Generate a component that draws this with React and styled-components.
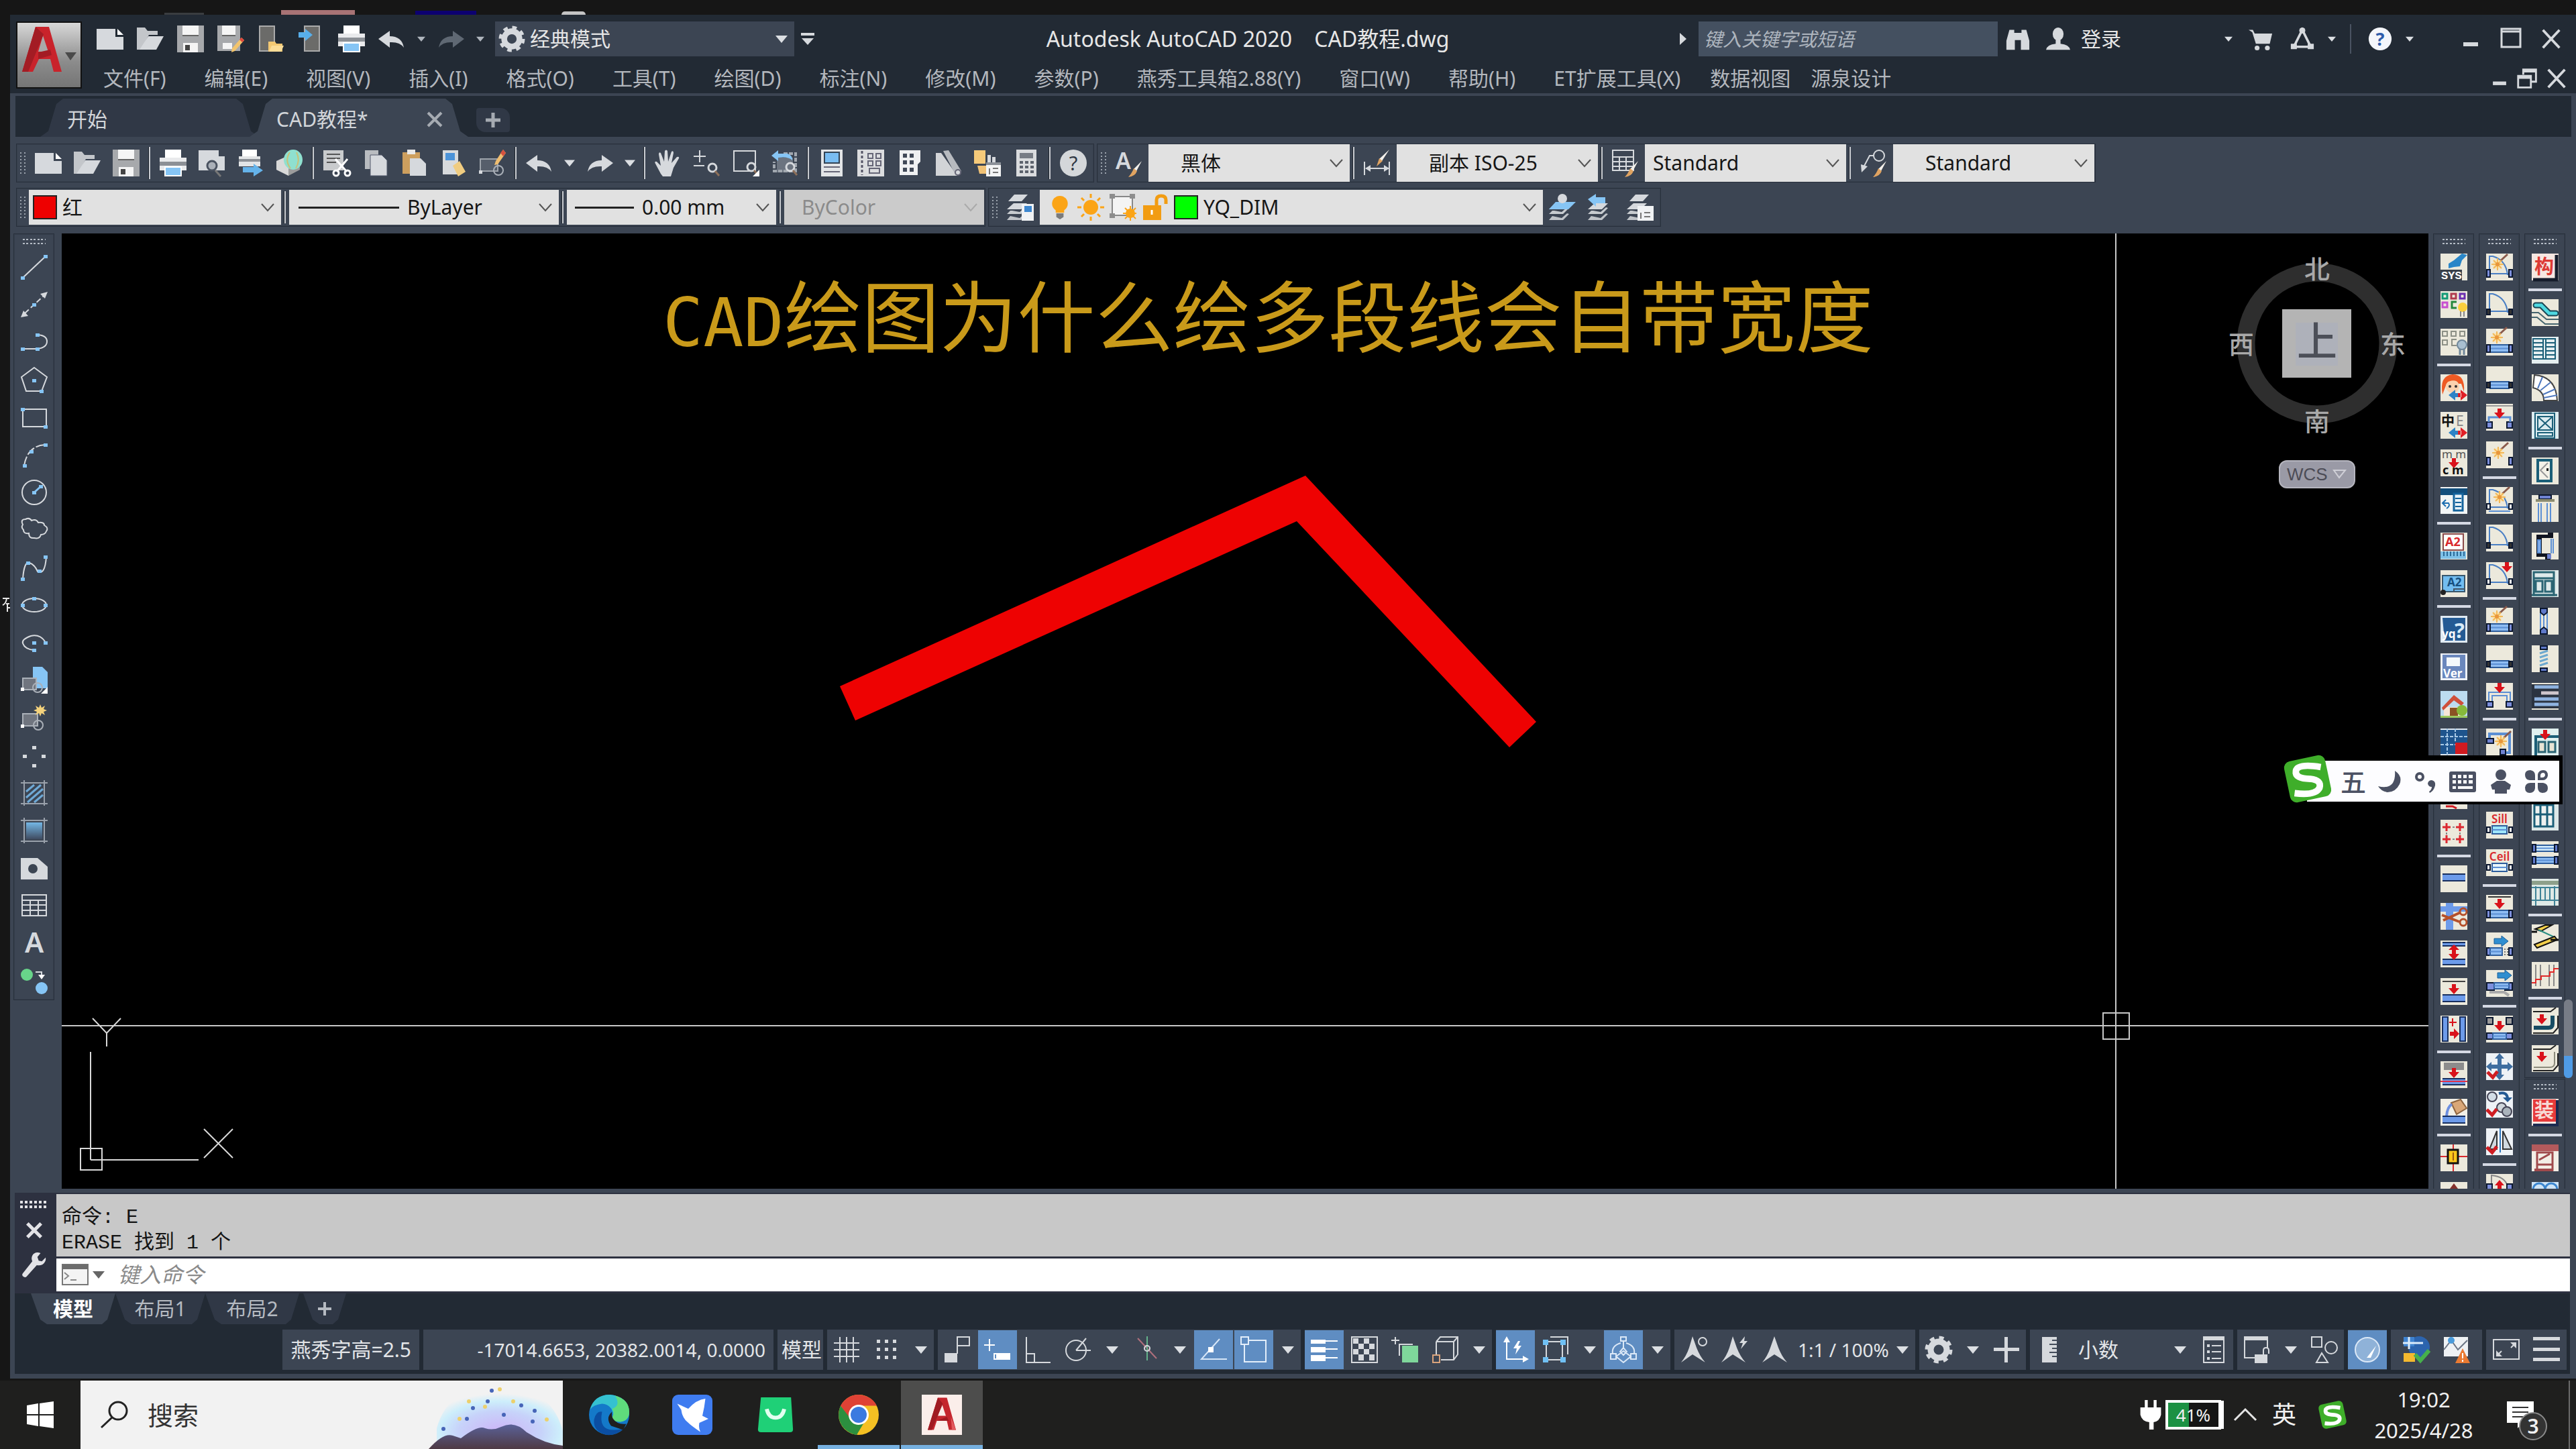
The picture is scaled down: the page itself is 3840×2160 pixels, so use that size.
import { useState } from "react";
import styled, { createGlobalStyle, css } from "styled-components";

const sans = `"Noto Sans", "Noto Sans CJK SC", sans-serif`;
const mono = `"Liberation Mono", "Noto Sans CJK SC", monospace`;
const panel = "#3c4553";
const dark = "#222a34";
const edge = "#28303c";
const light = "#d6d9dd";
const sky = "#86c5f5";
const cream = "#ece9dc";

const GlobalStyle = createGlobalStyle`
  * { box-sizing: border-box; }
  body { margin: 0; background: #161616; font-family: ${sans}; font-size: 30px; line-height: 40px; }
  button, input, select { font: inherit; color: inherit; margin: 0; padding: 0; border: 0; background: none; border-radius: 0; outline: none; }
  a { color: inherit; text-decoration: none; }
  svg { display: block; flex: none; overflow: visible; }
`;

/* ---------- shared pieces of the drawings ---------- */

const Bg = ({ c = cream }) => <rect width="40" height="40" fill={c} />;
const Down = ({ x = 20, y = 2 }) => (
  <path transform={`translate(${x} ${y})`} d="M-3 0h6v6h5l-8 9-8-9h5z" fill="#d9121b" />
);
const Wand = ({ x = 17, y = 15 }) => (
  <g transform={`translate(${x} ${y})`}>
    <path d="M3-4L15-15" stroke="#8a5a4c" strokeWidth="3" />
    <circle r="7" fill="#fbe3b0" />
    <path d="M0-9V9M-9 0H9M-6-6L6 6M-6 6L6-6" stroke="#f2b95a" strokeWidth="2" />
    <circle r="3" fill="#e8963c" />
  </g>
);
const Stubs = ({ y = 24, h = 11, w = 6, fill = "#7d8fdc" }) => (
  <g fill={fill} stroke="#0c1830" strokeWidth="2">
    <rect x="1" y={y} width={w - 1} height={h} />
    <rect x={40 - w} y={y} width={w - 1} height={h} />
  </g>
);
const Band = ({ x = 6, y = 24, w = 28, h = 11, fill = "#8fbdf2" }) => (
  <g>
    <rect x={x} y={y} width={w} height={h} fill={fill} stroke="#2d5d9c" strokeWidth="2" />
    <path d={`M${x} ${y + h / 2}h${w}`} stroke="#5b8fd4" strokeWidth="2" />
  </g>
);
const Slab = ({ y, h = 9 }) => (
  <g>
    <rect x="3" y={y} width="34" height={h} fill="#6d9bea" />
    <path d={`M3 ${y}h34M3 ${y + h}h34`} stroke="#182f5e" strokeWidth="2" />
  </g>
);
const Leaf = () => (
  <path d="M5 32V4h5q20 6 22 28M5 30h28" fill="none" stroke="#4a7fc4" strokeWidth="2" />
);
const Right = ({ x = 12, y = 6 }) => (
  <path transform={`translate(${x} ${y})`} d="M0 3h11v-4l10 8-10 8v-4H0z" fill="#2f8ed0" stroke="#1c5f96" />
);
const Dot = ({ x, y }) => <rect x={x - 3} y={y - 2} width="6" height="5" fill={sky} />;
const Star = ({ x, y }) => (
  <path transform={`translate(${x} ${y})`} d="M0-9l2 5 5-3-2 5 5 2-5 2 2 5-5-3-2 5-2-5-5 3 2-5-5-2 5-2-2-5 5 3z" fill="#f4d27c" />
);
const Pencil = () => (
  <g>
    <path d="M36 18l4 4-14 16-5 2 1-6z" fill="#f2c46c" />
    <path d="M36 18l4 4-3 3-4-4z" fill="#e0473c" />
  </g>
);
const Brush = () => (
  <g>
    <path d="M39 17l-8 15-4-3z" fill="#f4f1ec" />
    <path d="M27 28l5 4q-3 8-13 9 5-5 8-13z" fill="#e0a361" />
  </g>
);
const Lens = ({ x = 28, y = 28 }) => (
  <g transform={`translate(${x} ${y})`} fill="none">
    <circle r="6" stroke={light} strokeWidth="3" />
    <path d="M4 5l6 7" stroke="#8d6f59" strokeWidth="3" />
  </g>
);
const Layers = () => (
  <g fill={light}>
    <path d="M10 14h20l-9 9H0z" />
    <path d="M8 25h-3l-5 5h21l9-9-3-1-8 7z" opacity=".9" />
    <path d="M5 33l-5 6h21l9-9-3-1-8 7z" opacity=".85" />
  </g>
);
const LogoA = ({ bg }) => (
  <g>
    {bg && <rect width="40" height="40" fill="#fbeeea" />}
    <path d="M16 3h9l9 32h-7l-2-9H15l-3 9H6z" fill="#c4262e" />
    <path d="M20 9l4 12h-8z" fill={bg ? "#fbeeea" : "#aaa"} />
    <path d="M16 3L6 35h4L21 9zM15 26l10-4 2 4z" fill="#a01b22" />
    <path d="M29 22l5 13h-4z" fill="#e35a5e" />
  </g>
);
const SogouS = () => (
  <g>
    <rect x="4" y="4" width="32" height="32" rx="5" transform="rotate(-12 20 20)" fill="#3fae2a" />
    <path d="M30 11Q12 8 11 14t11 6q9 1 7 7-3 6-19 4" fill="none" stroke="#fff" strokeWidth="5" />
  </g>
);

const line = { fill: "none", stroke: light, strokeWidth: 2 };

/* every icon is drawn on a 40 x 40 grid */
const icons = {
  new: <><path d="M0 5h28v12h12v19H0z" fill={light} /><path d="M31 5l9 9h-9z" fill="#fff" /></>,
  open: <><path d="M0 36V3h12l4 5h15v6H18L6 36z" fill="#c3c6ca" /><path d="M17 16h23L29 36H4z" fill={light} /></>,
  save: <><path d="M0 0h40v40H0z" fill="#a7a9ac" /><path d="M8 0h24v14H8zM9 26h22v14H9z" fill="#f5f5f5" /><path d="M8 15h24" stroke="#666" strokeWidth="2" /><path d="M12 29h7v8h-7z" fill="#444" /></>,
  saveAs: <><path d="M0 0h34v38H0z" fill="#a7a9ac" /><path d="M7 0h20v14H7zM8 26h14v9H8z" fill="#f5f5f5" /><path d="M7 15h20" stroke="#666" strokeWidth="2" /><Pencil /></>,
  mobileOpen: <><path d="M3 1h22v37H3z" fill="#6b6b69" stroke="#aaa" strokeWidth="2" /><path d="M16 24h10l2 3h9v12H16z" fill="#f3c873" /><path d="M21 30h18l-4 9H17z" fill="#fbdc97" /></>,
  mobileSave: <><path d="M10 1h22v37H10z" fill="#6b6b69" stroke="#aaa" strokeWidth="2" /><path d="M1 10h10V5l11 9-11 9v-5H1z" fill="#57aeea" /></>,
  print: <><path d="M8 0h24v12H8z" fill="#fff" /><path d="M0 12h40v19H0z" fill="#e9eaec" /><path d="M0 18h40v6H0z" fill="#8c9096" /><path d="M8 26h24v13H8z" fill={sky} stroke="#fff" strokeWidth="2" /></>,
  undo: <path d="M0 20L17 8v8q18 0 21 17-6-9-21-8v8z" fill={light} />,
  redo: <path d="M40 20L23 8v8Q5 16 2 33q6-9 21-8v8z" fill={light} />,
  redoDim: <path d="M40 20L23 8v8Q5 16 2 33q6-9 21-8v8z" fill="#5f6873" />,
  gear: <><circle cx="20" cy="20" r="12" fill="none" stroke={light} strokeWidth="9" /><circle cx="20" cy="20" r="18" fill="none" stroke={light} strokeWidth="5" strokeDasharray="7 7.14" /></>,
  customize: <><path d="M10 11h20v4H10z" fill={light} /><path d="M11 19h18l-9 10z" fill={light} /></>,
  binoculars: <path d="M6 5h8v5h12V5h8l5 18v15H25V22h-10v16H1V23z" fill={light} />,
  user: <><ellipse cx="20" cy="12" rx="9" ry="11" fill={light} /><path d="M16 22h8v6q14 1 16 10H0q2-9 16-10z" fill={light} /></>,
  cart: <><path d="M0 5h7l3 6h29l-4 17H12L6 9" fill={light} /><circle cx="14" cy="35" r="4" fill={light} /><circle cx="31" cy="35" r="4" fill={light} /></>,
  appStore: <><path d="M20 5L6 33h28z" fill="none" stroke={light} strokeWidth="4" /><circle cx="20" cy="6" r="5" fill={light} /><path d="M1 28h10v9H1zM29 28h10v9H29z" fill={light} /></>,
  helpWhite: <><circle cx="20" cy="20" r="19" fill="#f4f6fb" /><text x="20" y="31" textAnchor="middle" fontSize="30" fontWeight="700" fill="#2e5cab">?</text></>,
  min: <path d="M9 25h22v6H9z" fill={light} />,
  max: <path d="M6 5h28v27H6zM6 9h28" fill="none" stroke={light} strokeWidth="3" />,
  restore: <path d="M13 14V6h20v19h-8M5 16h20v18H5zM5 19h20M13 9h20" fill="none" stroke={light} strokeWidth="3" />,
  close: <path d="M7 6l26 28M33 6L7 34" fill="none" stroke={light} strokeWidth="4" />,
  preview: <><path d="M0 1h30v9h9v21H0z" fill={light} /><circle cx="20" cy="24" r="7" fill="#aab0b8" stroke="#4a5260" strokeWidth="3" /><path d="M25 31l8 9" stroke="#777" strokeWidth="3" /></>,
  publish: <><path d="M7 0h22v10H7z" fill="#fff" /><path d="M2 10h32v15H2z" fill="#e2e4e6" /><path d="M2 14h32v4H2z" fill="#8c9096" /><path d="M8 26h16v-5l14 10-14 9v-6H8z" fill="#65b3ea" /></>,
  globe: <><path d="M0 17l18-8v30L0 30z" fill="#d9d9d9" /><path d="M18 39l17-9V14H18z" fill="#9c9c9c" /><ellipse cx="25" cy="15" rx="14" ry="15" fill="#8fe0cf" /><path d="M20 4q-8 12 1 24M30 4q6 12-1 24" stroke="#c9c178" strokeWidth="2" fill="none" /></>,
  cut: <><path d="M0 1h30v30H0z" fill="#c9cbcd" /><path d="M5 7h20M5 13h20M5 19h14" stroke="#555" strokeWidth="2" /><path d="M18 14l17 19M36 14L20 33" stroke="#fff" strokeWidth="3" /><circle cx="19" cy="35" r="4" fill="none" stroke="#fff" strokeWidth="3" /><circle cx="36" cy="35" r="4" fill="none" stroke="#fff" strokeWidth="3" /></>,
  copy: <><path d="M4 1h20v28H4z" fill="#b9bcc0" /><path d="M12 8h17l8 8v23H12z" fill={light} stroke="#50586a" /></>,
  paste: <><path d="M2 4h26v32H2z" fill="#cd9f5e" /><path d="M9 0h12v7H9z" fill="#e8e8e8" /><path d="M13 13h16l8 8v18H13z" fill={light} /></>,
  match: <><path d="M4 1h23v36H4z" fill="#d8dadc" /><path d="M8 5h14v11H8z" fill="#4c93d8" /><path d="M19 24l10-7 9 16-11 7z" fill="#f0cc80" /></>,
  blockEdit: <><path d="M2 14h26v18H2z" fill="#565e6b" stroke="#9da3ab" strokeWidth="2" /><path d="M0 31h5v5H0z" fill={light} /><circle cx="29" cy="31" r="7" fill="none" stroke="#aab0b8" strokeWidth="2" /><path d="M36 0l4 5-12 17-5 1 2-6z" fill="#efbd70" /><path d="M36 0l4 5-4 5-4-5z" fill="#d5523f" /></>,
  hand: <path d="M9 36L1 21q-2-4 2-3l6 6L6 7q0-4 3-2l5 13L15 2q2-3 4 0l1 16 5-15q3-2 3 2l-3 15 8-9q4-1 3 2L28 27l-4 13H12z" fill={light} />,
  zoomRt: <><path d="M0 10h18M9 1v18M0 24h16" {...line} /><Lens x={28} y={27} /></>,
  zoomWin: <><path d="M2 2h32v30H2z" {...line} /><Lens x={28} y={26} /><path d="M40 30v10H30z" fill="#fff" /></>,
  zoomPrev: <><path d="M8 12h24v22H8z" fill="#6c7480" /><path d="M18 6h18v26H4V18" fill="none" stroke="#a1a7af" strokeWidth="4" strokeDasharray="6 2" /><path d="M0 9l10-8v5h14q8 3 7 10-5-6-21-4v5z" fill={sky} /><Lens x={28} y={26} /></>,
  props: <><path d="M4 0h32v40H4z" fill="#e3e5e7" /><path d="M9 4h22v16H9z" fill="#79bdf2" stroke="#345" strokeWidth="2" /><path d="M8 26h24M8 33h24" stroke="#667" strokeWidth="2" /></>,
  design: <><path d="M0 0h40v40H0z" fill="#dcdddf" /><path d="M7 2v36" stroke="#556" strokeWidth="3" strokeDasharray="4 3" /><path d="M16 6h7v7h-7zM28 6h7v7h-7zM16 17h7v7h-7zM28 17h7v7h-7zM18 28h15v7H18z" fill="none" stroke="#667" strokeWidth="2" /></>,
  palettes: <><path d="M5 1h31v17l-4 4v16H5z" fill="#f0f1f2" /><path d="M10 6h6v6h-6zM20 6h6v6h-6zM10 16h6v6h-6zM20 16h6v6h-6zM10 27h6v6h-6zM20 27h6v6h-6z" fill="#424a58" /></>,
  sheetSet: <><path d="M1 5h8l24 34H1z" fill="#d2d4d7" /><path d="M12 2l8-1 19 31-8 7z" fill="#b7babf" /><circle cx="34" cy="34" r="4" fill={light} stroke="#667" strokeWidth="2" /></>,
  markup: <><path d="M0 1h17v20H0z" fill="#f6ca7a" /><path d="M20 8h5v13h-5zM27 11h5v10h-5z" fill={light} /><path d="M5 24h14v12H8z" fill="#f0c175" /><path d="M18 20h22v20H18z" fill="#f3f4f5" /><path d="M18 21h22" stroke="#8b9098" strokeWidth="4" /><path d="M23 28v9M28 28h8M28 34h8" stroke="#777" strokeWidth="2" /></>,
  calc: <><path d="M5 0h30v40H5z" fill="#dadcde" /><path d="M10 5h20v8H10z" fill="#777c84" /><path d="M10 17h5v4h-5zM18 17h5v4h-5zM26 17h5v4h-5zM10 24h5v4h-5zM18 24h5v4h-5zM26 24h5v4h-5zM10 31h5v4h-5zM18 31h5v4h-5zM26 31h5v4h-5z" fill="#5c626c" /></>,
  help: <><circle cx="20" cy="20" r="20" fill="#d4d7da" /><text x="20" y="31" textAnchor="middle" fontSize="29" fill="#2f3744">?</text></>,
  textStyle: <><text x="0" y="29" fontSize="34" fontWeight="600" fill={light}>A</text><Brush /></>,
  dimStyle: <><path d="M1 18v20M38 18v20M3 28h34" {...line} /><path d="M2 28l8-5v10zM38 28l-8-5v10z" fill={light} /><path d="M38 0L27 17l-4-3z" fill="#f4f1ec" /><path d="M23 13l5 4-9 8z" fill="#e0a361" /></>,
  tableStyle: <><path d="M1 1h31v30H1zM1 11h31M1 18h31M1 25h31M11 11v20M21 11v20" {...line} /><Brush /></>,
  leaderStyle: <><circle cx="28" cy="9" r="8" {...line} /><path d="M20 9h-6L4 28" {...line} /><path d="M1 22l10 3-9 9z" fill={light} /><Brush /></>,
  layerProps: <><Layers /><path d="M11 1h20l-9 10H2z" fill={light} /><path d="M22 15h18v25H22z" fill="#f0f2f4" /><path d="M26 18h11v9H26z" fill="#3d87cf" /></>,
  layerCurrent: <><Layers /><path d="M10 12h30L29 23H0z" fill={sky} /><circle cx="20" cy="7" r="7" fill={light} /></>,
  layerPrev: <><Layers /><path d="M0 8l12-8v5h14v9H12v5z" fill={sky} /></>,
  layerStates: <><Layers /><path d="M13 1h20l-9 10H4z" fill={light} /><path d="M16 18h24v22H16z" fill="#f0f2f4" /><path d="M21 28v9M26 28h9M26 34h9" stroke="#777" strokeWidth="2" /></>,
  bulb: <><circle cx="20" cy="14" r="13" fill="#fba416" /><path d="M13 22h14v7H13z" fill="#fba416" /><path d="M14 30h12v6l-6 4-6-4z" fill="#7b7b7b" /></>,
  sun: <><circle cx="20" cy="20" r="11" fill="#fba416" /><path d="M20 0v6M20 34v6M0 20h6M34 20h6M6 6l4 4M30 30l4 4M34 6l-4 4M6 34l4-4" stroke="#fba416" strokeWidth="3" /></>,
  vpFreeze: <><path d="M4 4h30v28H4z" fill="#f4f4f4" stroke="#888" strokeWidth="2" /><path d="M0 0h8v7H0zM30 0h8v7h-8zM0 29h8v7H0z" fill="#8d8d8d" /><circle cx="31" cy="29" r="7" fill="#fba416" /><path d="M31 18v22M20 29h20M23 21l16 16M39 21L23 37" stroke="#fba416" strokeWidth="2" /></>,
  lock: <><path d="M2 17h27v22H2z" fill="#f29c12" /><path d="M22 17V9q0-6 7-6t7 6v6" fill="none" stroke="#f29c12" strokeWidth="5" /><path d="M15 24v7" stroke="#fff" strokeWidth="3" /></>,

  line: <><path d="M3 36L37 4" {...line} /><Dot x={3} y={36} /><Dot x={37} y={4} /></>,
  xline: <><path d="M6 33L34 7" {...line} strokeDasharray="8 4" /><path d="M0 39l4-10 7 8zM40 1L29 4l7 7z" fill={light} /><Dot x={20} y={20} /></>,
  pline: <><path d="M3 30h22q14-2 14-11T25 9" {...line} /><Dot x={3} y={30} /><Dot x={25} y={30} /><Dot x={25} y={9} /></>,
  polygon: <><path d="M20 2l19 14-8 21H8L1 16z" {...line} /><Dot x={20} y={21} /><Dot x={31} y={37} /></>,
  rect: <><path d="M3 8h35v26H3z" {...line} /><Dot x={3} y={8} /><Dot x={37} y={34} /></>,
  arc: <><path d="M5 36Q10 6 37 5" {...line} strokeDasharray="14 3" /><Dot x={6} y={36} /><Dot x={16} y={15} /><Dot x={37} y={5} /></>,
  circle: <><circle cx="20" cy="20" r="18" {...line} /><path d="M20 20l10-9" stroke={sky} strokeWidth="3" /><Dot x={20} y={20} /><Dot x={30} y={11} /></>,
  revcloud: <path d="M3 12q-4-8 4-8 6-3 9 2 7-3 10 3 9-1 9 4 7 4 3 9-2 5-8 5-2 7-10 5-8 1-8-7-8 1-8-5-4-4-1-8z" {...line} />,
  spline: <><path d="M3 37Q5 10 13 13t12 13q11 6 13-22" {...line} /><Dot x={3} y={37} /><Dot x={11} y={13} /><Dot x={28} y={25} /><Dot x={37} y={4} /></>,
  ellipse: <><ellipse cx="20" cy="20" rx="18" ry="10" {...line} /><Dot x={3} y={20} /><Dot x={20} y={10} /><Dot x={37} y={20} /></>,
  ellipseArc: <><path d="M36 18Q28 7 15 10 1 15 3 21q3 9 17 10" {...line} /><Dot x={20} y={20} /><Dot x={20} y={31} /><Dot x={37} y={20} /></>,
  insert: <><path d="M18 0h14l8 8v24H18z" fill={sky} /><path d="M3 17h20v17H3z" fill="#70757f" stroke="#aab0b8" strokeWidth="2" /><circle cx="25" cy="31" r="7" fill="none" stroke="#aab0b8" strokeWidth="2" /><path d="M40 30v10H30zM0 31h5v5H0z" fill="#fff" /></>,
  block: <><path d="M3 14h22v18H3z" fill="#70757f" stroke="#aab0b8" strokeWidth="2" /><circle cx="26" cy="31" r="7" fill="none" stroke="#aab0b8" strokeWidth="2" /><Star x={29} y={9} /><path d="M0 30h5v5H0z" fill="#fff" /></>,
  point: <path d="M17 6h6v5h-6zM3 19h6v5H3zM31 19h6v5h-6zM17 33h6v5h-6z" fill={light} />,
  hatch: <><path d="M5 1v38M35 1v38M0 5h40M0 36h40" stroke="#9aa1ab" strokeWidth="2" /><path d="M8 18l12-10M8 27L30 8M10 34L33 14M20 34l13-11" stroke="#6fa9d6" strokeWidth="3" /></>,
  gradient: <><defs><linearGradient id="fade" x2="0" y2="1"><stop stopColor="#74b7e6" /><stop offset="1" stopColor="#3f4b60" /></linearGradient></defs><path d="M5 1v38M35 1v38M0 5h40M0 36h40" stroke="#9aa1ab" strokeWidth="2" /><path d="M8 8h24v25H8z" fill="url(#fade)" /></>,
  region: <><path d="M0 5h25l15 13v19H0z" fill={light} /><ellipse cx="18" cy="21" rx="7" ry="7" fill={panel} /></>,
  table: <path d="M2 4h36v31H2zM2 12h36M2 19h36M2 27h36M14 12v23M26 12v23" {...line} />,
  mtext: <text x="20" y="34" textAnchor="middle" fontSize="42" fontWeight="600" fill={light}>A</text>,
  addSel: <><circle cx="9" cy="11" r="9" fill="#68d58a" /><circle cx="31" cy="31" r="9" fill={sky} /><path d="M22 7h9v6" {...line} /><path d="M26 11h10l-5 7z" fill="#fff" /></>,

  sys: <><Bg /><path d="M0 24h32v16H0z" fill="#39404a" /><path d="M12 15l8-5 12-10 8 2-8 8-3 9-9 1-8 2z" fill="#2a86c8" /><text x="1" y="38" fontSize="17" fontWeight="700" fill="#fff" fontFamily="Liberation Mono">SYS</text></>,
  blocks: <><Bg /><g fill="none" strokeWidth="3"><path d="M3 4h7v7H3z" stroke="#139a77" /><path d="M16 4h7v7h-7z" stroke="#b03a4f" /><path d="M29 4h7v7h-7z" stroke="#6b2fb0" /><path d="M3 17h7v7H3z" stroke="#c84fd0" /><path d="M24 16h-7v9h7" stroke="#25883d" /></g><circle cx="33" cy="24" r="7" fill="#fbcf3d" /><path d="M30 30v8M35 30v8" stroke="#888" strokeWidth="2" /></>,
  keys: <><Bg /><path d="M3 4h7v7H3zM16 4h7v7h-7zM29 4h7v7h-7zM3 17h7v7H3zM24 16h-7v9h7" fill="none" stroke="#8d9086" strokeWidth="2" /><circle cx="32" cy="24" r="7" fill="#a9bfd0" stroke="#70879a" strokeWidth="2" /><path d="M29 30v9M35 30v9" stroke="#70879a" strokeWidth="3" /></>,
  girl: <><Bg /><path d="M3 30Q-2 2 18 0q19 0 17 26l-4-12H9z" fill="#ee5a24" /><circle cx="18" cy="18" r="10" fill="#fbd2ae" /><path d="M8 13Q20 5 30 14L28 6H10z" fill="#ee5a24" /><circle cx="14" cy="18" r="2" fill="#333" /><circle cx="23" cy="18" r="2" fill="#333" /><path d="M12 31l10-8v16zM22 28v6h4v-6z" fill="#2d83c6" /><path d="M40 31l-10-8v16zM26 28h5v6h-5z" fill="#e01f26" /></>,
  zhEn: <><Bg /><text x="1" y="21" fontSize="20" fontWeight="700" fill="#111">中</text><text x="23" y="21" fontSize="21" fill="#888">E</text><path d="M12 31l10-8v16zM22 28v6h4v-6z" fill="#2d83c6" /><path d="M40 31l-10-8v16zM26 28h5v6h-5z" fill="#e01f26" /></>,
  mmCm: <><Bg /><text x="2" y="13" fontSize="17" fill="#555">m m</text><Down x={20} y={13} /><text x="3" y="37" fontSize="18" fontWeight="700" fill="#111">c m</text></>,
  exitDoc: <><Bg c="#f2f5f5" /><path d="M0 2h40v10H0z" fill="#124e7c" /><path d="M20 10h13v25H20z" fill="#e8f2f8" stroke="#14639c" strokeWidth="3" /><path d="M22 17h9M22 23h9M22 29h9" stroke="#14639c" strokeWidth="2" /><path d="M4 24h8q3 4-3 8M8 19l-5 5 5 5" stroke="#1b6db0" strokeWidth="2" fill="none" /></>,
  a2red: <><Bg /><path d="M4 2h30v24H4z" fill="#fff" stroke="#8b4a4a" strokeWidth="2" /><text x="7" y="20" fontSize="18" fontWeight="700" fill="#d9292d">A2</text><path d="M0 28h38v11H0z" fill="#7fc1e8" /><path d="M5 28v7M10 28v7M15 28v7M20 28v7M25 28v7M30 28v7M35 28v7" stroke="#2d6c99" strokeWidth="2" /></>,
  a2blue: <><Bg /><path d="M3 8h33v24H3z" fill="#72bdf0" stroke="#38586e" strokeWidth="2" /><text x="10" y="24" fontSize="17" fontWeight="700" fill="#17507f">A2</text><circle cx="4" cy="33" r="4" fill="#222" /><path d="M20 33v-5h16" stroke="#456" strokeWidth="2" fill="none" /></>,
  yq: <><Bg c="#dfe9f2" /><path d="M3 3h34v34H6z" fill="#245a94" /><text x="2" y="33" fontSize="17" fontWeight="700" fill="#fff">yq</text><text x="21" y="33" fontSize="31" fontWeight="700" fill="#d8ebf8">?</text></>,
  ver: <><Bg c="#eef1f7" /><path d="M3 2h34v35H3z" fill="#6a87bd" /><path d="M9 6h20v13H9z" fill="#f4f8fb" /><text x="4" y="36" fontSize="17" fontWeight="700" fill="#fff">Ver</text></>,
  house: <><Bg c="#bcdcf0" /><path d="M5 24h26v15H5z" fill="#f6e6d8" /><path d="M2 25L20 6l15 12-4 4-11-8L4 29z" fill="#cf4f3a" /><path d="M14 25h12v14H14z" fill="#8a5324" /><circle cx="32" cy="29" r="8" fill="#86b93a" /><path d="M0 37h40v3H0z" fill="#9ccb5f" /></>,
  axisNet: <><Bg c="#dfe8f0" /><path d="M0 2h40v36H0z" fill="#1e548d" /><path d="M0 12h40M0 24h22M10 0v40M22 0v20" stroke="#a8c9e6" strokeWidth="2" strokeDasharray="5 2" /><path d="M22 21h18v17H22z" fill="#d01a20" /></>,
  axisRed: <><Bg /><path d="M8 36h10l6 3" stroke="#d01a20" strokeWidth="3" fill="none" /></>,
  plus4: <><Bg /><path d="M3 11h12M9 5v12M23 11h12M29 5v12M3 29h12M9 23v12M23 29h12M29 23v12" stroke="#dc2830" strokeWidth="3" /><path d="M9 19v3M29 19v3M18 11h3M18 29h3" stroke="#888" strokeWidth="2" /></>,
  wall: <><Bg /><Slab y={13} h={10} /></>,
  scissors: <><Bg /><path d="M0 5h40v8H0zM8 0h11v40H8z" fill="#6d9bea" /><path d="M2 18l26 10M4 26l26-12" stroke="#b5502a" strokeWidth="4" /><circle cx="34" cy="13" r="5" fill="none" stroke="#b5502a" strokeWidth="3" /><circle cx="34" cy="29" r="5" fill="none" stroke="#b5502a" strokeWidth="3" /></>,
  wallMove: <><Bg /><Slab y={3} h={5} /><Slab y={28} h={8} /><path d="M20 6l8 8h-5v6h5l-8 9-8-9h5v-6h-5z" fill="#d9121b" /></>,
  wallFrom: <><Bg /><path d="M3 5h34" stroke="#444" strokeWidth="2" /><Down x={20} y={9} /><Slab y={25} h={10} /></>,
  wallPair: <><Bg /><path d="M3 2h8v36H3zM29 2h8v36h-8z" fill="#6d9bea" stroke="#182f5e" strokeWidth="2" /><path d="M13 10h11M18 4v12" stroke="#d9121b" strokeWidth="2" /><path d="M14 24h6v-5l8 8-8 8v-5h-6z" fill="#d9121b" /></>,
  wallAlign: <><Bg /><path d="M5 2h30v11H5z" fill="#8c8c8c" /><Down x={20} y={10} /><Slab y={26} h={9} /><path d="M0 30h40" stroke="#e03048" strokeWidth="2" /></>,
  bucket: <><Bg c="#f2efe6" /><path d="M16 6L30 1l9 13-15 9z" fill="#d9a778" stroke="#8e6540" strokeWidth="2" /><path d="M17 8q-7 4-8 18" stroke="#6d8fe0" strokeWidth="4" fill="none" /><Slab y={26} h={10} /></>,
  column: <><Bg /><path d="M0 18h40M19 0v40" stroke="#d9292d" strokeWidth="2" /><path d="M11 8h15v20H11z" fill="#fbc71c" stroke="#111" strokeWidth="3" /><path d="M19 12v12" stroke="#a05a10" strokeWidth="2" /></>,
  columnCut: <><Bg /><path d="M14 10l6-8 6 8z" fill="#84302c" /></>,

  doorWand: <><Bg /><Leaf /><Stubs /><Wand x={17} y={16} /></>,
  door: <><Bg /><Leaf /><Stubs y={27} h={8} fill="#333" /></>,
  winWand: <><Bg /><Band /><Stubs /><Wand x={16} y={13} /></>,
  win: <><Bg /><Band y={23} h={10} /><Stubs y={24} h={8} fill="#333" /></>,
  bay: <><Bg /><Stubs y={27} h={9} w={9} /><path d="M4 27v-7h32v7" fill="none" stroke="#5b8fd4" strokeWidth="3" /><path d="M0 3h40" stroke="#999" strokeWidth="2" /><Down x={20} y={7} /></>,
  openWand: <><Bg /><Stubs /><Wand x={18} y={17} /></>,
  doorWall: <><Bg /><Leaf /><Stubs y={25} h={8} fill="#f4f4f4" /><path d="M4 36h32" stroke="#5b8fd4" strokeWidth="2" /><Wand x={20} y={15} /></>,
  doorDown: <><Bg /><Leaf /><Stubs y={25} h={8} fill="#f4f4f4" /><Down x={31} y={0} /></>,
  bay2: <><Bg /><Stubs y={28} h={8} w={10} /><path d="M4 27V14h32v13M9 27v-8h22v8" fill="none" stroke="#5b8fd4" strokeWidth="2" /><Down x={20} y={0} /></>,
  corner: <><Bg /><path d="M5 15V8h30v28h-8" fill="none" stroke="#5b8fd4" strokeWidth="4" /><path d="M1 15h10v7H1zM21 31h8v8h-8z" fill="#6f83d2" stroke="#0c1830" strokeWidth="2" /><Wand x={22} y={19} /></>,
  sill: <><Bg /><text x="20" y="17" textAnchor="middle" fontSize="17" fontWeight="600" fill="#d9292d">Sill</text><Stubs y={23} h={8} fill="#f4f4f4" /><Band x={9} w={22} y={21} h={12} fill="#9fe6fa" /></>,
  ceil: <><Bg /><text x="20" y="17" textAnchor="middle" fontSize="17" fontWeight="600" fill="#d9292d">Ceil</text><Stubs y={23} h={8} fill="#f4f4f4" /><Band x={9} w={22} y={21} h={12} fill="#e8f6fa" /></>,
  winDown: <><Bg /><path d="M3 3h34" stroke="#333" strokeWidth="2" /><Down x={20} y={6} /><Band y={23} /><Stubs y={23} /></>,
  winRight: <><Bg /><Right /><Stubs y={23} /><Band w={18} y={23} /><path d="M28 24v10M32 24v10" stroke="#777" strokeDasharray="2 2" strokeWidth="2" /></>,
  winRight2: <><Bg /><Right x={17} y={1} /><Stubs y={19} w={12} /><Band x={12} w={22} y={19} h={9} /><path d="M5 33h22l7 5" stroke="#aaa" strokeWidth="4" fill="none" /></>,
  swapWin: <><Bg /><Stubs y={3} h={10} w={10} fill="#999" /><Stubs y={26} h={9} w={10} /><Band x={10} w={20} y={26} h={9} /><Down x={20} y={8} /></>,
  move: <><Bg c="#eef2f6" /><path d="M20 0l7 8h-4v9h9v-4l8 7-8 7v-4h-9v9h4l-7 8-7-8h4v-9H8v4l-8-7 8-7v4h9V8h-4z" fill="#3f6ea0" /><path d="M2 28l8 8 7-9" stroke="#cf1d22" strokeWidth="5" fill="none" /></>,
  copyObj: <><Bg c="#eef2f6" /><circle cx="9" cy="9" r="7" fill="#d3dde6" stroke="#445" strokeWidth="2" /><path d="M19 4q12-3 13 7" stroke="#245a94" strokeWidth="4" fill="none" /><path d="M25 10h14l-7 7z" fill="#245a94" /><circle cx="23" cy="25" r="7" fill="#cfd5da" stroke="#445" strokeWidth="2" /><circle cx="31" cy="31" r="7" fill="#aab3bb" stroke="#445" strokeWidth="2" /><path d="M1 28l8 8 7-9" stroke="#cf1d22" strokeWidth="5" fill="none" /></>,
  mirror: <><Bg c="#eef2f6" /><path d="M16 4v27H5zM25 4v27h13z" fill="#cfd8df" stroke="#333" strokeWidth="2" /><path d="M21 0v36" stroke="#2f77bd" strokeWidth="2" /><path d="M1 28l8 8 7-9" stroke="#cf1d22" strokeWidth="5" fill="none" /></>,
  doorUp: <><Bg /><path d="M8 22V2q20 2 24 16" fill="none" stroke="#888" strokeWidth="2" /><path d="M20 9l7 8h-4v8h-6v-8h-4z" fill="#d9121b" /><Stubs y={15} w={9} /></>,

  gou: <><Bg c="#f6e7e2" /><path d="M37 2v37H2" stroke="#151c2b" strokeWidth="5" fill="none" /><text x="4" y="30" fontSize="29" fontWeight="700" fill="#dd3a35">构</text></>,
  pipe: <><Bg /><path d="M6 9h8l12 12h10" stroke="#1a4654" strokeWidth="9" fill="none" strokeLinecap="round" /><path d="M6 9h8l12 12h10" stroke="#4fd8e0" strokeWidth="5" fill="none" strokeLinecap="round" /><path d="M0 20h10l12 10h18M0 27h8l12 10h20" stroke="#45656e" strokeWidth="2" fill="none" /></>,
  stairs: <><Bg c="#e4eef0" /><path d="M2 3h33v30H2zM17 3v30M21 3v30M2 9h15M2 15h15M2 21h15M2 27h15M21 9h14M21 15h14M21 21h14M21 27h14" stroke="#1b5f78" strokeWidth="2" fill="none" /></>,
  arcStair: <><Bg /><path d="M4 1q32 2 34 38H18Q18 24 2 20z" fill="#fff" stroke="#444" strokeWidth="2" /><path d="M9 21L16 4M13 24L28 12M17 30l18-8M18 35l20-4" stroke="#4f79c0" strokeWidth="2" /></>,
  lift: <><Bg c="#dcecf0" /><path d="M5 2h29v37H5zM9 7h22v20H9zM9 7l22 20M31 7L9 27M9 31h22v5H9z" stroke="#1b5f78" strokeWidth="2" fill="none" /></>,
  doorElev: <><Bg /><path d="M9 4h20v31H9z" stroke="#1b5f78" strokeWidth="4" fill="#f4f1e8" /><path d="M24 8L13 19l11 11" stroke="#999" strokeWidth="2" fill="none" /><path d="M22 16h3v4h-3z" fill="#222" /></>,
  pillar: <><Bg /><path d="M11 0h18v6H11z" fill="#6f83d2" stroke="#0c1830" strokeWidth="2" /><path d="M6 8h28" stroke="#8c8c70" strokeWidth="4" /><path d="M10 12v28M14 12v28M23 12v28M28 12v28" stroke="#5b8fd4" strokeWidth="2" /></>,
  shaft: <><Bg /><path d="M7 3h17V0h8v8H15v23h13v9h-8v-4H7z" fill="#101420" /><path d="M9 11h4v19H9zM29 9v22M32 9v22" fill="#8fb8f4" stroke="#5b8fd4" strokeWidth="2" /><path d="M23 32h6v7h-6z" fill="#6f83d2" /></>,
  facade: <><Bg c="#dfeaea" /><path d="M3 3h30v34H3zM3 12h30M6 16h10v16H6zM20 16h10v16H20z" stroke="#2a6473" strokeWidth="3" fill="none" /><path d="M0 37h38" stroke="#2a6473" strokeWidth="3" /></>,
  winSec: <><Bg /><path d="M13 4v32M18 6v26M23 4v32" stroke="#5b8fd4" strokeWidth="2" /><path d="M13 1h10v6l-5 4-5-4zM13 39h10v-6l-5-4-5 4z" fill="#5f79c9" stroke="#0c1830" strokeWidth="2" /></>,
  hatchSec: <><Bg /><path d="M12 12l12-4M12 18l12-4M12 24l12-4M12 30l12-4" stroke="#6da9cf" strokeWidth="3" /><path d="M13 1h10v5H13zM13 34h10v5H13z" fill="#5f79c9" stroke="#0c1830" strokeWidth="2" /></>,
  levels: <><Bg c="#2b3340" /><path d="M4 6h36M4 24h36M4 32h36" stroke="#8fb3e0" strokeWidth="5" /><path d="M14 15h26" stroke="#d0c6cc" strokeWidth="5" /><path d="M0 39h40M0 1h40" stroke={cream} strokeWidth="2" /></>,
  facadeDown: <><Bg c="#dff0ef" /><path d="M6 40V12h34" stroke="#1b5f78" strokeWidth="4" fill="none" /><path d="M10 20h10v15H10zM25 20h10v15H25z" stroke="#2a6473" strokeWidth="3" fill="#e8e4d4" /><Down x={20} y={2} /></>,
  grid6: <><Bg c="#dce8e8" /><path d="M4 2h28v32H4zM4 16h28M13 2v32M23 2v32" stroke="#1b5f78" strokeWidth="3" fill="#eef2f0" /></>,
  twinWin: <><Bg /><Band y={6} h={9} fill="#d3ecfa" /><Stubs y={5} h={11} fill="#5f79c9" /><Band y={24} h={9} /><Stubs y={23} h={11} fill="#5f79c9" /></>,
  railing: <><Bg c="#dfe9e6" /><path d="M0 3h40v6H0z" fill="#8ea08b" /><path d="M0 13h40M0 32h40M6 11v29M13 13v19M20 13v19M27 13v19M34 11v29" stroke="#3e8296" strokeWidth="2" /></>,
  flight: <><Bg /><path d="M5 7L20 1h10L14 10z" fill="#f3cf49" stroke="#111" strokeWidth="2" /><path d="M10 8l26 12" stroke="#2b8f83" strokeWidth="2" /><path d="M4 30l30-12 4 5L8 35z" fill="#f3cf49" stroke="#111" strokeWidth="2" /><path d="M0 11h8M28 23h12" stroke="#111" strokeWidth="3" /></>,
  stepLine: <><Bg /><path d="M6 4v32M13 4v32M26 4v32M33 4v32" stroke="#888" strokeWidth="2" /><path d="M0 31h6v-5h8v-5h13v-6h6v-5h7" stroke="#e02a2a" strokeWidth="2" fill="none" /></>,
  curbFill: <><Bg /><path d="M2 6h26l8-6M2 38h30l7-8V12" stroke="#222" strokeWidth="2" fill="none" /><path d="M3 30h22q6 0 6-6V12" stroke="#174c63" strokeWidth="6" fill="none" /><Down x={15} y={10} /></>,
  curb: <><Bg /><path d="M2 6h26l8-6M2 38h30l7-8V12" stroke="#222" strokeWidth="2" fill="none" /><path d="M3 33h24q7 0 7-6V10" stroke="#8b8b7c" strokeWidth="2" fill="none" /><Down x={15} y={10} /></>,
  deco: <><Bg c="#f6e7e2" /><path d="M38 2v37H2" stroke="#1b2a50" strokeWidth="4" fill="none" /><path d="M2 1h34v33H2z" fill="#e63a3a" /><text x="4" y="28" fontSize="29" fontWeight="700" fill="#f7d9d4">装</text></>,
  cabinet: <><Bg c="#f3eee6" /><path d="M0 0h40v10H0z" fill="#b35a5c" /><path d="M8 12h23v26H8zM8 30h23M11 23l16-9" stroke="#a04a4c" strokeWidth="3" fill="none" /><path d="M4 36h28v4H4z" fill="#a04a4c" /></>,
  basin: <><Bg c="#cfe4f6" /><circle cx="11" cy="11" r="9" fill="none" stroke="#3c86cf" strokeWidth="3" /><circle cx="29" cy="11" r="9" fill="none" stroke="#3c86cf" strokeWidth="3" /></>,

  grid: <path d="M10 1v38M20 1v38M30 1v38M1 10h38M1 20h38M1 30h38" {...line} />,
  snap: <path d="M5 5h5v5H5zM17 5h5v5h-5zM29 5h5v5h-5zM5 17h5v5H5zM17 17h5v5h-5zM29 17h5v5h-5zM5 29h5v5H5zM17 29h5v5h-5zM29 29h5v5h-5z" fill={light} />,
  infer: <><path d="M20 14h18V1H20zM20 14v12" {...line} /><path d="M1 25h19v14H1z" fill={light} /></>,
  dyn: <><path d="M8 4v18M0 13h16" stroke="#fff" strokeWidth="2" /><path d="M14 25h25v10H14z" fill="#fff" /><path d="M17 27v6" stroke="#5f8dc2" strokeWidth="2" /></>,
  ortho: <path d="M3 1v38h36M3 26h12v13" {...line} />,
  polar: <><circle cx="17" cy="21" r="15" {...line} /><path d="M17 21L32 3M17 21h22" {...line} /></>,
  iso: <><path d="M8 3l28 30" stroke="#b0707c" strokeWidth="2" /><path d="M22 0v36" stroke="#64b28b" strokeWidth="2" /><circle cx="22" cy="18" r="4" {...line} /></>,
  track: <><path d="M29 4L2 34h38" stroke="#d7e6f7" strokeWidth="2" fill="none" /><path d="M12 16h8v8h-8z" fill="#fff" /></>,
  osnap: <path d="M6 12v26h32V6H12M1 1h11v11H1z" stroke="#e3eefa" strokeWidth="2" fill="none" />,
  lwt: <><path d="M0 5h22v6H0zM0 16h22v8H0zM0 28h22v9H0z" fill="#fff" /><path d="M22 7h18M22 19h18M22 32h18" stroke="#fff" strokeWidth="2" /></>,
  transp: <><path d="M1 1h38v38H1z" {...line} /><path d="M3 3h8v8H3zM19 3h8v8h-8zM11 11h8v8h-8zM27 11h8v8h-8zM3 19h8v8H3zM19 19h8v8h-8zM11 27h8v9h-8zM27 27h8v9h-8z" fill={light} /></>,
  cycle: <><path d="M6 1v11M0 6h12M12 29V12h20" {...line} /><path d="M16 14h24v25H16z" fill="#7fd79b" /></>,
  osnap3d: <><path d="M7 8L13 1h26v26l-6 8H14M7 8v20M7 8h26v27M33 8l6-7" {...line} /><path d="M2 28h10v11H2z" fill="none" stroke="#d9a37c" strokeWidth="2" /></>,
  ducs: <><path d="M7 8v26h26" stroke="#fff" strokeWidth="2" fill="none" /><path d="M7 0l5 9H2zM40 34l-9-5v10z" fill="#fff" /><path d="M24 7l-7 11h5l-2 9 9-13h-5l3-7z" fill="#fff" /></>,
  filter: <><path d="M6 8v26M8 8h22M30 8v26M8 35h22M12 1h26v26" {...line} /><path d="M1 5h8v8H1zM27 5h8v8h-8zM1 31h8v8H1zM27 31h8v8h-8z" fill="#6fc0f4" /></>,
  gizmo: <path d="M16 1h8v6h-8zM20 7v10M1 26h8v8H1zM31 26h8v8h-8zM16 10Q2 14 4 26M24 10q14 4 12 16M20 17l-5 6 5 5 5-5zM20 22L9 30l11 9 11-9z" stroke="#dbe8f7" strokeWidth="2" fill="none" />,
  ann1: <><path d="M18 0l6 17q5 13 13 22L18 27 1 39q8-10 12-22z" fill={light} /><circle cx="33" cy="8" r="6" {...line} /></>,
  ann2: <><path d="M18 0l6 17q5 13 13 22L18 27 1 39q8-10 12-22z" fill={light} /><path d="M36 0l-8 10h5l-3 9 10-12h-5z" fill={light} /></>,
  ann3: <path d="M20 0l6 17q5 13 13 22L20 27 2 39q8-10 12-22z" fill={light} />,
  plus: <path d="M17 1h5v16h17v5H22v17h-5V22H1v-5h16z" fill={light} />,
  ruler: <><path d="M9 1h22v38H9z" fill={light} /><path d="M31 6h-7M31 12h-11M31 18h-7M31 24h-11M31 30h-7" stroke="#444d5b" strokeWidth="2" /></>,
  quick: <><path d="M5 1h30v38H5z" {...line} /><path d="M5 1h30v5H5z" fill={light} /><path d="M10 12h4v4h-4zM10 21h4v4h-4zM10 31h4v4h-4z" fill={light} /><path d="M17 14h14M17 23h14M17 33h14" {...line} /></>,
  lockUi: <><path d="M18 32H2V1h34v16" {...line} /><path d="M2 1h34v5H2z" fill={light} /><path d="M17 27h19v13H17z" fill={light} /><path d="M30 27v-6q0-4 4-4t4 4v5" {...line} /></>,
  isolate: <><path d="M1 1h15v15H1zM16 25l9 14H8z" {...line} /><circle cx="30" cy="17" r="9" {...line} /></>,
  perf: <><circle cx="20" cy="20" r="18" stroke="#dbe8f7" strokeWidth="2" fill="#8fb2d8" /><path d="M19 32l14-18-8 18z" fill="#fff" /></>,
  trusted: <><circle cx="24" cy="16" r="16" fill="#2c64ae" /><path d="M1 1h16v14H1z" fill="#3f83d0" /><path d="M9 1v18M0 10h30" stroke="#dcecfa" strokeWidth="3" /><path d="M1 25h17v13H1z" fill="#f4b92f" /><path d="M18 27l8 9 13-15" stroke="#46b04c" strokeWidth="6" fill="none" /></>,
  alert: <><path d="M1 1h36v29H1z" fill="#eef1f4" /><path d="M1 20l11-14 10 14L36 6" stroke="#6b7484" strokeWidth="2" fill="none" /><circle cx="12" cy="6" r="5" fill="#4a9bdb" /><path d="M29 18l11 22H18z" fill="#ea7a32" /><path d="M29 25v8M29 35v3" stroke="#fff" strokeWidth="2" /></>,
  clean: <><path d="M1 5h38v29H1z" {...line} /><path d="M26 9h9v9zM5 21v9h9z" fill={light} /><path d="M33 11l-6 6M7 28l6-6" {...line} /></>,
  burger: <path d="M0 1h40v5H0zM0 17h40v5H0zM0 32h40v5H0z" fill={light} />,

  wrench: <path d="M38 8l-6 6-5-1-2-6 5-6q-9-3-13 4-2 4 0 9L2 33q-2 3 1 5t5 0l16-18q5 1 9-1 6-4 5-11z" fill="#e2e2e6" />,
  x: <path d="M8 8l24 24M32 8L8 32" stroke="#e2e2e6" strokeWidth="6" fill="none" />,
  prompt: <><path d="M1 5h38v30H1z" fill="#f4f4f4" stroke="#777" strokeWidth="2" /><path d="M1 5h38v7H1z" fill="#6d6d6d" /><path d="M4 17l6 5-6 5M13 28h9" stroke="#888" strokeWidth="2" fill="none" /></>,
  windows: <path d="M0 6l17-3v16H0zM19 3l21-3v19H19zM0 21h17v16L0 34zM19 21h21v19l-21-3z" fill="#fff" />,
  search: <><circle cx="26" cy="14" r="13" fill="none" stroke="#222" strokeWidth="3" /><path d="M17 24L1 39" stroke="#222" strokeWidth="3" /></>,
  edge: <><circle cx="20" cy="20" r="20" fill="#1479c9" /><path d="M1 15Q5 0 21 0q18 2 19 17 0 9-9 10-10 0-7-7Q23 10 13 9 4 10 1 15z" fill="#35c1d0" /><path d="M26 1q14 4 14 16 0 9-9 10-10 0-7-7 1-3-1-6 9-3 3-13z" fill="#5fdc7c" /><path d="M13 17q-4 19 13 18 6 0 10-3Q28 41 18 40 4 37 5 25q2-9 8-8z" fill="#0b4ea2" /><path d="M23 17q-1 4 1 7 4 6 13 5l-3 6-12-4q-6-8 1-14z" fill="#1f1f1e" /></>,
  bird: <><rect width="40" height="40" rx="6" fill="#3f7cf0" /><path d="M5 9l11 5Q24 5 33 4q-1 9-3 17l6 3-9 4q-1 5 1 9-9-6-13-10-5-4-6-12z" fill="#fff" /></>,
  bag: <><path d="M5 2h31l2 33q0 3-3 3H5q-3 0-3-3z" fill="#1fd077" /><path d="M11 14q2 9 9 9t9-9" stroke="#e2fff0" strokeWidth="4" fill="none" /></>,
  chrome: <><circle cx="20" cy="20" r="20" fill="#f4c023" /><path d="M2 11Q8 0 20 0q13 1 18 11H20l-9 13z" fill="#df4235" /><path d="M2 11q-5 12 3 22 6 6 13 7l9-15-15-1z" fill="#2c8f3f" /><circle cx="20" cy="20" r="10" fill="#fff" /><circle cx="20" cy="20" r="8" fill="#3b7ae0" /></>,
  cad: <LogoA bg />,
  plug: <path d="M12 0h4v10h8V0h4v10h6v10q-2 9-10 10v10h-6V30Q8 29 6 20V10h6z" fill="#fff" />,
  up: <path d="M4 28L20 12l16 16" stroke="#e4e4e4" strokeWidth="3" fill="none" />,
  sogou: <SogouS />,
  note: <><path d="M0 0h40v32H24l-8 8v-8H0z" fill="#fff" /><path d="M8 9h24M8 16h24M8 23h18" stroke="#333" strokeWidth="2" /></>,
  moon: <path d="M28 4q12 8 7 20-6 12-18 12Q8 35 3 27q16 4 22-5 4-7 3-18z" fill="#4b5163" />,
  punct: <><circle cx="10" cy="13" r="5" fill="none" stroke="#4b5163" strokeWidth="4" /><path d="M22 23q1-5 6-5 6 1 5 8-2 8-8 11l-1-2q4-3 4-7-5 0-6-5z" fill="#4b5163" /></>,
  keyboard: <><rect y="5" width="40" height="31" rx="3" fill="#4b5163" /><path d="M5 10h5v5H5zM13 10h5v5h-5zM21 10h5v5h-5zM29 10h6v5h-6zM5 18h5v5H5zM13 18h5v5h-5zM21 18h5v5h-5zM29 18h6v5h-6zM5 27h5v4H5zM13 27h22v4H13z" fill="#fff" /></>,
  person: <><circle cx="22" cy="10" r="8" fill="#4b5163" /><path d="M16 19h12l9 6-2 7h-4v6H13v-6H9l-2-7z" fill="#4b5163" /></>,
  clover: <g fill="#4b5163"><path d="M18 18H10q-7-1-7-8t8-7q7 1 7 8zM18 22v8q-1 7-8 7t-7-8q1-7 8-7zM22 22h8q7 1 7 8t-8 7q-7-1-7-8z" /><path d="M24 16v-6q1-5 6-5t5 6q-1 5-6 5z" fill="none" stroke="#4b5163" strokeWidth="4" /></g>,
};

const Icon = ({ name, size = 40 }) => (
  <svg width={size} height={size} viewBox="0 0 40 40" aria-hidden="true">
    {icons[name]}
  </svg>
);
const Tri = ({ color = "#dcdfe3", w = 18 }) => (
  <svg width={w} height={w} viewBox="0 0 18 18" aria-hidden="true">
    <path d="M0 4h18L9 15z" fill={color} />
  </svg>
);
const Chevron = ({ color = "#555" }) => (
  <svg width="20" height="20" viewBox="0 0 20 20" aria-hidden="true">
    <path d="M1 5l9 10 9-10" fill="none" stroke={color} strokeWidth="2" />
  </svg>
);

/* ---------- window frame ---------- */

const Desktop = styled.div`
  position: relative;
  display: flex;
  flex-direction: column;
  height: 100vh;
  min-height: 1200px;
  overflow: hidden;
`;
const Behind = styled.div`
  display: flex;
  align-items: flex-end;
  flex: none;
  height: 22px;
  padding-left: 245px;
`;
const Sliver = styled.i`
  width: ${(p) => p.$w}px;
  height: ${(p) => p.$h}px;
  margin-right: ${(p) => p.$after}px;
  background: ${(p) => p.$c};
  border-radius: ${(p) => (p.$round ? "20px 20px 0 0" : 0)};
`;
const DesktopLabel = styled.svg`
  position: absolute;
  left: 3px;
  top: 888px;
`;
const Frame = styled.div`
  flex: 1;
  min-height: 0;
  display: flex;
  flex-direction: column;
  margin: 0 0 3px 15px;
  background: ${panel};
`;
const TitleBar = styled.header`
  display: flex;
  flex: none;
  padding: 10px 7px 0 9px;
  height: 117px;
  background: ${dark};
  color: #e6e6e6;
`;
const AppButton = styled.button`
  display: flex;
  align-items: center;
  justify-content: center;
  width: 98px;
  height: 100px;
  margin-right: 12px;
  background: linear-gradient(#d8d8d8, #8c8c8c 60%, #757575);
  border: 2px solid #111;
`;
const TitleRows = styled.div`
  flex: 1;
  min-width: 0;
`;
const Row = styled.div`
  display: flex;
  align-items: center;
  height: 52px;
`;
const IconButton = styled.button`
  display: flex;
  align-items: center;
  justify-content: center;
  flex: none;
  width: ${(p) => p.$w || 60}px;
  height: 52px;
`;
const Title = styled.h1`
  flex: 1;
  margin: 0;
  font-size: 32px;
  font-weight: 400;
  text-align: center;
  white-space: pre;
`;
const Keyword = styled.input`
  width: 446px;
  height: 52px;
  margin-left: 8px;
  padding: 0 8px;
  background: #445060;
  font-size: 28px;
  font-style: italic;
  &::placeholder { color: #aeb5be; opacity: 1; }
`;
const Login = styled.button`
  width: 208px;
  padding-left: 4px;
  text-align: left;
`;
const Rule = styled.i`
  width: 2px;
  height: 44px;
  margin: 0 13px;
  background: #4a5361;
`;
const WindowButtons = styled.div`
  display: flex;
  margin-left: ${(p) => p.$push || "47px"};
`;
const MenuRow = styled.nav`
  display: flex;
  align-items: center;
  height: 41px;
  margin-top: 12px;
  padding-left: 20px;
  gap: 57px;
  color: #b3b7bd;
  white-space: nowrap;
`;
const Tight = styled.div`
  display: flex;
  gap: 30px;
  margin-left: -13px;
`;

/* ---------- drop-downs ---------- */

const Picker = styled.label`
  display: flex;
  align-items: center;
  flex: none;
  width: ${(p) => p.$w}px;
  height: ${(p) => (p.$tall ? 56 : 52)}px;
  padding: 0 10px 0 ${(p) => p.$pad || 6}px;
  gap: 8px;
  background: ${(p) => (p.$off ? "#cbcbcb" : "#e1e1e1")};
  color: ${(p) => (p.$off ? "#8b8b8b" : "#161616")};
  ${(p) => p.$dark && css`
    margin-left: 8px;
    background: ${panel};
    color: #e6e6e6;
  `}
`;
const Select = styled.select`
  flex: 1;
  min-width: 0;
  height: 100%;
  appearance: none;
  opacity: 1;
  &:disabled { color: inherit; opacity: 1; }
`;
const Swatch = styled.i`
  width: 36px;
  height: 36px;
  background: ${(p) => p.$c};
  border: 2px solid #222;
`;
const Stroke = styled.i`
  width: ${(p) => p.$w}px;
  height: 3px;
  margin: 0 4px 0 4px;
  background: #222;
`;

const Drop = ({ label, value, dark: isDark, off, children, ...rest }) => (
  <Picker $dark={isDark} $off={off} {...rest}>
    {children}
    <Select aria-label={label} defaultValue={value} disabled={off}>
      <option>{value}</option>
    </Select>
    {isDark ? <Tri /> : <Chevron color={off ? "#aaa" : "#555"} />}
  </Picker>
);

/* ---------- file tabs and toolbars ---------- */

const FileTabs = styled.div`
  display: flex;
  align-items: flex-end;
  flex: none;
  height: 61px;
  margin: 4px 7px 0 8px;
  padding-left: 37px;
  background: ${dark};
  color: #d2d5d9;
`;
const FileTab = styled.button`
  display: flex;
  align-items: center;
  justify-content: space-between;
  width: 326px;
  height: 57px;
  margin-right: -14px;
  padding: 4px 38px 0 40px;
  background: ${(p) => (p.$on ? panel : "#303846")};
  clip-path: polygon(0 100%, 12px 85%, 24px 14%, 34px 0, 292px 0, 302px 14%, 314px 85%, 100% 100%);
`;
const NewTab = styled.button`
  display: flex;
  align-items: center;
  justify-content: center;
  width: 50px;
  height: 36px;
  margin: 0 0 7px 26px;
  background: #303846;
  border-radius: 4px 14px 4px 14px;
`;
const ToolRow = styled.div`
  display: flex;
  flex: none;
  height: 58px;
  margin: ${(p) => p.$top}px 0 0 9px;
  gap: 4px;
`;
const Bar = styled.div`
  display: flex;
  align-items: center;
  height: 58px;
  padding-right: 1px;
  border: 1px solid ${edge};
  box-shadow: inset 0 0 0 1px #363f4c;
`;
const Split = styled.i`
  width: 2px;
  height: 48px;
  margin: 0 5px;
  background: #c9ccd1;
  box-shadow: -1px 0 0 #1d232c;
`;
const GripX = () => (
  <svg width="18" height="44" viewBox="0 0 18 44" aria-hidden="true">
    <path d="M6 6v34M12 6v34" stroke="#9ba3ad" strokeWidth="2" strokeDasharray="2 3" />
  </svg>
);
const GripY = () => (
  <svg width="34" height="20" viewBox="0 0 34 20" aria-hidden="true">
    <path d="M0 7h34M0 13h34" stroke="#b5bcc5" strokeWidth="2" strokeDasharray="3 2 3 3" />
  </svg>
);

const Tools = ({ names, width = 58 }) =>
  names.map((name, i) => {
    if (name === "|") return <Split key={i} />;
    if (name === "v")
      return (
        <IconButton key={i} $w={width === 58 ? 32 : 28} aria-label="more">
          <Tri color={width === 58 ? "#dcdfe3" : "#b0b6be"} w={width === 58 ? 16 : 12} />
        </IconButton>
      );
    return (
      <IconButton key={i} $w={width} aria-label={name}>
        <Icon name={name} />
      </IconButton>
    );
  });

/* ---------- workspace ---------- */

const Workspace = styled.main`
  flex: 1;
  min-height: 0;
  display: flex;
  margin-top: 10px;
  padding: 0 16px 0 5px;
`;
const Canvas = styled.section`
  position: relative;
  flex: 1;
  min-width: 0;
  margin: 0 7px 0 11px;
  background: #000;
  overflow: hidden;
`;
const Sheet = styled.svg`
  position: absolute;
  inset: 0;
`;
const Heading = styled.h2`
  position: absolute;
  left: 896px;
  top: 53px;
  margin: 0;
  color: #c99a1a;
  font-size: 116px;
  font-weight: 400;
  line-height: 140px;
  white-space: nowrap;
`;
const HeadingLatin = styled.span`
  font-family: "DejaVu Sans Mono", monospace;
  font-size: 100px;
`;
const CubeBox = styled.div`
  position: absolute;
  right: 34px;
  top: 31px;
  display: flex;
  flex-direction: column;
  align-items: center;
  gap: 43px;
`;
const Wcs = styled.button`
  display: flex;
  align-items: center;
  justify-content: space-between;
  width: 114px;
  height: 42px;
  padding: 0 10px;
  border-radius: 12px;
  background: #9a9aa6;
  border: 2px solid #b5b5be;
  color: #4c4c56;
  font: 26px "Liberation Sans", sans-serif;
`;
const Column = styled.div`
  display: flex;
  flex-direction: column;
  flex: none;
  width: 61px;
  margin-left: ${(p) => p.$gap || 0}px;
  overflow: hidden;
`;
const VBar = styled.div`
  display: flex;
  flex-direction: column;
  align-items: center;
  flex: none;
  padding-top: 1px;
  margin-bottom: 1px;
  border: 1px solid ${edge};
  box-shadow: inset 0 0 0 1px #363f4c;
`;
const VTool = styled.button`
  display: flex;
  align-items: center;
  justify-content: center;
  width: 56px;
  height: 56px;
`;
const VSplit = styled.i`
  width: 50px;
  height: 4px;
  margin: 4px 0;
  background: #d5d9e4;
`;

const drawTools = "line xline pline polygon rect arc circle revcloud spline ellipse ellipseArc insert block point hatch gradient region table mtext addSel".split(" ");
const colA = "sys blocks keys | girl zhEn mmCm exitDoc | a2red a2blue | yq ver house axisNet | | axisRed plus4 | wall scissors wallMove wallFrom wallPair | wallAlign bucket | column columnCut".split(" ");
const colB = "doorWand door winWand win bay openWand | doorWall door doorDown | winWand win bay2 | corner corner | sill ceil | winDown winRight winRight2 | swapWin move copyObj mirror | doorUp".split(" ");
const colC = "gou | pipe stairs arcStair lift | doorElev pillar shaft facade winSec hatchSec levels | facadeDown facade grid6 twinWin railing | flight stepLine | curbFill curb".split(" ");
const colD = "deco | cabinet basin".split(" ");

const VTools = ({ names }) => (
  <VBar>
    <GripY />
    {names.map((name, i) =>
      name === "|" ? (
        <VSplit key={i} />
      ) : (
        <VTool key={i} aria-label={name}>
          <Icon name={name} />
        </VTool>
      )
    )}
  </VBar>
);

const ViewCube = () => (
  <svg width="264" height="264" viewBox="0 0 264 264" fontSize="38" fontWeight="500" fill="#a9a9a9" textAnchor="middle">
    <circle cx="132" cy="133" r="106" fill="none" stroke="#2e2e2e" strokeWidth="27" />
    <rect x="80" y="82" width="103" height="102" fill="#b4b4b4" />
    <rect x="100" y="102" width="63" height="64" fill="#aeb1ba" />
    <text x="132" y="152" fontSize="60" fill="#4c4f58" fontFamily="Noto Sans CJK SC">上</text>
    <text x="132" y="36">北</text>
    <text x="132" y="263">南</text>
    <text x="19" y="148">西</text>
    <text x="245" y="148">东</text>
  </svg>
);

/* ---------- command line ---------- */

const Command = styled.section`
  display: flex;
  flex: none;
  height: 150px;
  margin: 6px 9px 0 7px;
  background: #2d3140;
`;
const CommandSide = styled.div`
  display: flex;
  flex-direction: column;
  align-items: center;
  gap: 12px;
  width: 62px;
  padding: 8px 4px 0 0;
`;
const SideButton = styled.button`
  width: 40px;
  height: 40px;
  display: grid;
  place-items: center;
`;
const CommandBody = styled.div`
  flex: 1;
  display: flex;
  flex-direction: column;
  padding: 2px 0 3px;
  gap: 3px;
`;
const Log = styled.pre`
  height: 93px;
  margin: 0;
  padding: 16px 8px 0;
  background: #c8c8c8;
  color: #141414;
  font-family: ${mono};
  font-size: 30px;
  line-height: 38px;
`;
const Prompt = styled.label`
  display: flex;
  align-items: center;
  flex: 1;
  gap: 6px;
  padding: 0 0 2px 8px;
  background: #fff;
`;
const PromptInput = styled.input`
  flex: 1;
  height: 44px;
  margin-left: 14px;
  color: #333;
  font-size: 32px;
  font-style: italic;
  &::placeholder { color: #8a8a8a; opacity: 1; }
`;

/* ---------- layout tabs and status bar ---------- */

const Foot = styled.footer`
  flex: none;
  margin: 0 9px 7px 7px;
  background: ${dark};
  color: #e3e5e8;
`;
const LayoutTabs = styled.div`
  display: flex;
  height: 48px;
  padding-left: 24px;
`;
const LayoutTab = styled.button`
  width: ${(p) => p.$w}px;
  height: 46px;
  background: ${(p) => (p.$on ? panel : "#303846")};
  color: ${(p) => (p.$on ? "#fff" : "#b5bac1")};
  font-weight: ${(p) => (p.$on ? 600 : 400)};
  clip-path: polygon(0 0, 100% 0, calc(100% - 12px) 85%, calc(100% - 20px) 100%, 24px 100%, 14px 85%);
`;
const NewLayout = styled(LayoutTab)`
  display: grid;
  place-items: center;
  margin-left: 6px;
`;
const Status = styled.div`
  display: flex;
  align-items: center;
  justify-content: flex-end;
  height: 72px;
  padding: 0 5px 1px 0;
  gap: 6px;
`;
const Group = styled.div`
  display: flex;
  align-items: center;
  height: 60px;
  gap: 2px;
  padding: 0 ${(p) => p.$pad || 0}px;
  background: ${panel};
`;
const StatusText = styled.span`
  width: ${(p) => p.$w}px;
  padding-right: 12px;
  font-size: ${(p) => p.$size || 30}px;
  text-align: right;
  white-space: nowrap;
`;
const StatusButton = styled.button`
  display: flex;
  align-items: center;
  justify-content: center;
  flex: none;
  width: ${(p) => (p.$slim ? 39 : 58)}px;
  height: 58px;
  background: ${(p) => (p.$on ? "#5f8dc2" : "none")};
`;
const Wide = styled.button`
  flex: none;
  width: ${(p) => p.$w}px;
  height: 58px;
  padding-left: ${(p) => p.$pad}px;
  font-size: ${(p) => p.$size || 30}px;
  text-align: left;
  white-space: nowrap;
`;

const StatusTools = ({ names }) =>
  names.split(" ").map((n, i) =>
    n === "v" ? (
      <StatusButton key={i} $slim aria-label="more">
        <Tri />
      </StatusButton>
    ) : (
      <StatusButton key={i} $on={n.startsWith("*")} aria-label={n.replace("*", "")}>
        <Icon name={n.replace("*", "")} />
      </StatusButton>
    )
  );

/* ---------- floating input bar ---------- */

const InputBar = styled.div`
  position: absolute;
  right: 20px;
  top: 1126px;
  display: flex;
  align-items: center;
  padding: 8px 5px 4px 0;
  background: #000;
`;
const InputStrip = styled.div`
  display: flex;
  align-items: center;
  justify-content: space-between;
  width: 376px;
  height: 61px;
  padding: 0 14px 0 50px;
  background: #fdfdff;
  color: #4b5163;
  font-size: 38px;
  font-weight: 500;
`;
const InputLogo = styled.span`
  position: absolute;
  left: -38px;
  top: -4px;
`;
const Scroll = styled.i`
  position: absolute;
  right: 5px;
  top: 1490px;
  width: 13px;
  height: 117px;
  border-radius: 6px;
  background: linear-gradient(#777c86 72%, #4f9be6 72%);
`;

/* ---------- taskbar ---------- */

const Taskbar = styled.div`
  display: flex;
  flex: none;
  height: 102px;
  background: #1f1f1e;
  color: #f0f0f0;
`;
const Start = styled.button`
  width: 120px;
  display: grid;
  place-items: center;
`;
const SearchBox = styled.label`
  display: flex;
  align-items: center;
  width: 719px;
  padding-left: 30px;
  gap: 30px;
  background: #f2f2f2;
`;
const SearchInput = styled.input`
  flex: 1;
  min-width: 0;
  height: 60px;
  color: #222;
  font-size: 38px;
  &::placeholder { color: #333; opacity: 1; }
`;
const Apps = styled.div`
  display: flex;
  margin-left: 8px;
  gap: 2px;
`;
const TaskButton = styled.button`
  display: grid;
  place-items: center;
  width: 122px;
  padding-top: 6px;
  border-bottom: 6px solid ${(p) => (p.$run ? "#76b0e0" : "transparent")};
  background-color: ${(p) => (p.$on ? "#4d4d4c" : "transparent")};
`;
const Tray = styled.div`
  display: flex;
  align-items: center;
  margin-left: auto;
  margin-right: 9px;
  border-right: 2px solid #6a6a6a;
`;
const Battery = styled.span`
  width: 83px;
  height: 44px;
  margin-right: 14px;
  border: 4px solid #fff;
  background: linear-gradient(90deg, #1c9143 42%, #151515 42%);
  box-shadow: 5px 0 0 -1px #fff;
  font-size: 26px;
  line-height: 36px;
  text-align: center;
`;
const TrayButton = styled.button`
  display: grid;
  place-items: center;
  width: ${(p) => p.$w}px;
  height: 80px;
  font-size: 36px;
`;
const Clock = styled.time`
  width: 180px;
  margin-left: 10px;
  font-size: 31px;
  line-height: 46px;
  text-align: center;
`;
const Notes = styled.button`
  position: relative;
  width: 126px;
  padding-left: 34px;
`;
const Badge = styled.span`
  position: absolute;
  left: 52px;
  top: 16px;
  width: 42px;
  height: 42px;
  border: 2px solid #8a8a8a;
  border-radius: 50%;
  background: #333;
  font-size: 30px;
  font-weight: 600;
  line-height: 38px;
`;

const SearchArt = () => (
  <svg width="200" height="101" viewBox="0 0 200 101" aria-hidden="true">
    <defs>
      <radialGradient id="glow" cx=".5" cy=".75" r=".6">
        <stop stopColor="#cdb2f7" />
        <stop offset=".55" stopColor="#c7d3fa" />
        <stop offset=".8" stopColor="#cdeefb" />
        <stop offset="1" stopColor="#f2f2f2" />
      </radialGradient>
      <linearGradient id="hill" x2="0" y2="1">
        <stop stopColor="#5a6198" />
        <stop offset="1" stopColor="#4f3a44" />
      </linearGradient>
    </defs>
    <path d="M12 100V70Q30 6 106 4q76 4 94 70v26z" fill="url(#glow)" />
    <g fill="#4765b8">
      {[[22, 71], [66, 40], [88, 30], [112, 50], [138, 36], [158, 44], [155, 60], [94, 14], [57, 56]].map(([x, y]) => (
        <circle key={x} cx={x} cy={y} r="3" />
      ))}
    </g>
    <g fill="#ecd06c">
      {[[60, 30], [84, 38], [126, 30], [46, 56], [176, 57], [106, 12]].map(([x, y]) => (
        <circle key={x} cx={x} cy={y} r="3" />
      ))}
    </g>
    <path d="M0 101Q22 76 36 81l12 4q26-20 36-15 12 4 24-2 20-10 38 8 26 17 54 20v5z" fill="url(#hill)" />
  </svg>
);

const menus = ["文件(F)", "编辑(E)", "视图(V)", "插入(I)", "格式(O)", "工具(T)", "绘图(D)", "标注(N)", "修改(M)", "参数(P)", "燕秀工具箱2.88(Y)", "窗口(W)", "帮助(H)", "ET扩展工具(X)"];

export default function App() {
  const [command, setCommand] = useState("");

  return (
    <>
      <GlobalStyle />
      <Desktop>
        <Behind>
          <Sliver $w={59} $h={3} $after={115} $c="#3a3d40" />
          <Sliver $w={110} $h={7} $after={90} $c="#a87375" />
          <Sliver $w={91} $h={6} $after={127} $c="#0c0070" />
          <Sliver $w={36} $h={5} $after={0} $c="#c4c4c4" $round />
        </Behind>
        <DesktopLabel width="12" height="26" aria-hidden="true">
          <path d="M1 4h10M7 4q-1 8-6 10M6 12h5M8 12v12M8 18h4" fill="none" stroke="#e8e8e8" strokeWidth="2" />
        </DesktopLabel>

        <Frame>
          <TitleBar>
            <AppButton aria-label="application menu">
              <svg width="84" height="92" viewBox="0 0 84 92">
                <path d="M22 4h20l19 67H49l-5-19H27l-9 19H2z" fill="#c9232b" />
                <path d="M33 17l8 24H26z" fill="#a9a9a9" />
                <path d="M22 4L2 71h9L34 15zM26 42l18-4 2 8-20 6z" fill="#a31c24" />
                <path d="M66 42h17l-9 12z" fill="#4a4a4a" />
              </svg>
            </AppButton>
            <TitleRows>
              <Row>
                <Tools width={60} names={["new", "open", "save", "saveAs", "mobileOpen", "mobileSave", "print", "undo", "v", "redoDim", "v"]} />
                <Drop label="工作空间" value="经典模式" $w={446} dark>
                  <Icon name="gear" size={38} />
                </Drop>
                <IconButton $w={40} aria-label="customize">
                  <Icon name="customize" />
                </IconButton>
                <Title>{"Autodesk AutoCAD 2020    CAD教程.dwg"}</Title>
                <IconButton $w={28} aria-label="expand">
                  <svg width="12" height="18"><path d="M0 0l10 9-10 9z" fill={light} /></svg>
                </IconButton>
                <Keyword aria-label="搜索帮助" placeholder="键入关键字或短语" />
                <IconButton aria-label="search"><Icon name="binoculars" size={36} /></IconButton>
                <IconButton aria-label="account"><Icon name="user" size={36} /></IconButton>
                <Login>登录</Login>
                <IconButton $w={32} aria-label="account menu"><Tri w={12} /></IconButton>
                <IconButton $w={64} aria-label="store"><Icon name="cart" size={36} /></IconButton>
                <IconButton aria-label="apps"><Icon name="appStore" size={36} /></IconButton>
                <IconButton $w={28} aria-label="apps menu"><Tri w={12} /></IconButton>
                <Rule />
                <IconButton aria-label="help"><Icon name="helpWhite" size={36} /></IconButton>
                <IconButton $w={28} aria-label="help menu"><Tri w={12} /></IconButton>
                <WindowButtons>
                  <IconButton aria-label="minimize"><Icon name="min" /></IconButton>
                  <IconButton aria-label="maximize"><Icon name="max" /></IconButton>
                  <IconButton aria-label="close"><Icon name="close" size={38} /></IconButton>
                </WindowButtons>
              </Row>
              <MenuRow>
                {menus.map((m) => (
                  <a key={m} href="#menu">{m}</a>
                ))}
                <Tight>
                  <a href="#menu">数据视图</a>
                  <a href="#menu">源泉设计</a>
                </Tight>
                <WindowButtons $push="auto">
                  <IconButton $w={42} aria-label="minimize drawing"><Icon name="min" size={36} /></IconButton>
                  <IconButton $w={42} aria-label="restore drawing"><Icon name="restore" size={38} /></IconButton>
                  <IconButton $w={44} aria-label="close drawing"><Icon name="close" size={38} /></IconButton>
                </WindowButtons>
              </MenuRow>
            </TitleRows>
          </TitleBar>

          <FileTabs>
            <FileTab>开始</FileTab>
            <FileTab $on>
              CAD教程*
              <svg width="24" height="24"><path d="M2 2l20 20M22 2L2 22" stroke="#a6abb2" strokeWidth="4" /></svg>
            </FileTab>
            <NewTab aria-label="new drawing">
              <svg width="22" height="22"><path d="M11 0v22M0 11h22" stroke="#a6abb2" strokeWidth="5" /></svg>
            </NewTab>
          </FileTabs>

          <ToolRow $top={10}>
            <Bar>
              <GripX />
              <Tools names={["new", "open", "save", "|", "print", "preview", "publish", "globe", "|", "cut", "copy", "paste", "match", "blockEdit", "|", "undo", "v", "redo", "v", "|", "hand", "zoomRt", "zoomWin", "zoomPrev", "|", "props", "design", "palettes", "sheetSet", "markup", "calc", "|", "help"]} />
            </Bar>
            <Bar>
              <GripX />
              <Tools names={["textStyle"]} />
              <Drop label="文字样式" value="黑体" $w={300} $pad={48} $tall />
              <Tools names={["|", "dimStyle"]} />
              <Drop label="标注样式" value="副本 ISO-25" $w={300} $pad={48} $tall />
              <Tools names={["|", "tableStyle"]} />
              <Drop label="表格样式" value="Standard" $w={300} $pad={12} $tall />
              <Tools names={["|", "leaderStyle"]} />
              <Drop label="多重引线样式" value="Standard" $w={300} $pad={48} $tall />
            </Bar>
          </ToolRow>

          <ToolRow $top={8}>
            <Bar>
              <GripX />
              <Drop label="颜色" value="红" $w={376}>
                <Swatch $c="#ee0000" />
              </Drop>
              <Split />
              <Drop label="线型" value="ByLayer" $w={402} $pad={10}>
                <Stroke $w={150} />
              </Drop>
              <Split />
              <Drop label="线宽" value="0.00 mm" $w={312} $pad={8}>
                <Stroke $w={88} />
              </Drop>
              <Split />
              <Drop label="打印样式" value="ByColor" $w={298} $pad={26} off />
            </Bar>
            <Bar>
              <GripX />
              <Tools names={["layerProps"]} />
              <Drop label="图层" value="YQ_DIM" $w={750} $pad={12}>
                <Icon name="bulb" size={36} />
                <Icon name="sun" />
                <Icon name="vpFreeze" />
                <Icon name="lock" />
                <Swatch $c="#00ff00" />
              </Drop>
              <Tools names={["layerCurrent", "layerPrev", "layerStates"]} />
            </Bar>
          </ToolRow>

          <Workspace>
            <Column>
              <VTools names={drawTools} />
            </Column>
            <Canvas>
              <Sheet width="100%" height="100%">
                <path d="M1160 675L1854 361 2198 728 2158 766 1841 429 1183 726z" fill="#ee0202" />
                <path d="M0 1181h3043M3082 1181h446M3062 0v1162M3062 1201v300" stroke="#c8c8c8" strokeWidth="2" />
                <path d="M3043 1162h39v39h-39zM3043 1181h39M3062 1162v39" fill="none" stroke="#c8c8c8" strokeWidth="2" />
                <path d="M28 1364h32v32H28zM43 1381h161M43 1381V1220M46 1170l21 22 21-22M67 1192v20M212 1335l43 43M255 1335l-43 43" fill="none" stroke="#d8d8d8" strokeWidth="2" />
              </Sheet>
              <Heading>
                <HeadingLatin>CAD</HeadingLatin>绘图为什么绘多段线会自带宽度
              </Heading>
              <CubeBox>
                <ViewCube />
                <Wcs>
                  WCS
                  <svg width="22" height="16"><path d="M2 2h17l-9 11z" fill="none" stroke="#cfcfd6" strokeWidth="2" /></svg>
                </Wcs>
              </CubeBox>
            </Canvas>
            <Column><VTools names={colA} /></Column>
            <Column $gap={7}><VTools names={colB} /></Column>
            <Column $gap={7}>
              <VTools names={colC} />
              <VTools names={colD} />
            </Column>
          </Workspace>

          <Command>
            <CommandSide>
              <svg width="44" height="16"><path d="M1 6h42M1 13h42" stroke="#e2e2e6" strokeWidth="4" strokeDasharray="4 3" /></svg>
              <SideButton aria-label="close command line"><Icon name="x" size={34} /></SideButton>
              <SideButton aria-label="customize command line"><Icon name="wrench" size={38} /></SideButton>
            </CommandSide>
            <CommandBody>
              <Log>{"命令: E\nERASE 找到 1 个"}</Log>
              <Prompt>
                <Icon name="prompt" />
                <Tri color="#666" />
                <PromptInput
                  aria-label="命令"
                  placeholder="键入命令"
                  value={command}
                  onChange={(e) => setCommand(e.target.value)}
                />
              </Prompt>
            </CommandBody>
          </Command>

          <Foot>
            <LayoutTabs>
              <LayoutTab $w={126} $on>模型</LayoutTab>
              <LayoutTab $w={134}>布局1</LayoutTab>
              <LayoutTab $w={140}>布局2</LayoutTab>
              <NewLayout $w={64} aria-label="new layout">
                <svg width="20" height="20"><path d="M10 0v20M0 10h20" stroke="#b5bac1" strokeWidth="4" /></svg>
              </NewLayout>
            </LayoutTabs>
            <Status>
              <Group><StatusText $w={204}>燕秀字高=2.5</StatusText></Group>
              <Group><StatusText $w={522} $size={28}>-17014.6653, 20382.0014, 0.0000</StatusText></Group>
              <Group><Wide $w={68} $pad={6}>模型</Wide></Group>
              <Group><StatusTools names="grid snap v" /></Group>
              <Group><StatusTools names="infer *dyn ortho polar v iso v *track *osnap v" /></Group>
              <Group><StatusTools names="*lwt transp cycle osnap3d v" /></Group>
              <Group><StatusTools names="*ducs filter v *gizmo v" /></Group>
              <Group>
                <StatusTools names="ann1 ann2 ann3" />
                <Wide $w={138} $pad={4} $size={28}>1:1 / 100%</Wide>
                <StatusTools names="v" />
              </Group>
              <Group><StatusTools names="gear v plus" /></Group>
              <Group>
                <StatusTools names="ruler" />
                <Wide $w={142} $pad={12}>小数</Wide>
                <StatusTools names="v quick" />
              </Group>
              <Group><StatusTools names="lockUi v isolate" /></Group>
              <Group><StatusTools names="*perf" /></Group>
              <Group $pad={9}><StatusTools names="trusted alert" /></Group>
              <Group $pad={1}><StatusTools names="clean burger" /></Group>
            </Status>
          </Foot>
        </Frame>

        <Taskbar>
          <Start aria-label="start"><Icon name="windows" /></Start>
          <SearchBox>
            <Icon name="search" />
            <SearchInput aria-label="搜索" placeholder="搜索" />
            <SearchArt />
          </SearchBox>
          <Apps>
            <TaskButton aria-label="Edge"><Icon name="edge" size={60} /></TaskButton>
            <TaskButton aria-label="bird"><Icon name="bird" size={60} /></TaskButton>
            <TaskButton aria-label="store"><Icon name="bag" size={58} /></TaskButton>
            <TaskButton aria-label="Chrome" $run><Icon name="chrome" size={60} /></TaskButton>
            <TaskButton aria-label="AutoCAD" $run $on><Icon name="cad" size={60} /></TaskButton>
          </Apps>
          <Tray>
            <Icon name="plug" size={44} />
            <Battery>41%</Battery>
            <TrayButton $w={44} aria-label="hidden icons"><Icon name="up" /></TrayButton>
            <TrayButton $w={72}>英</TrayButton>
            <TrayButton $w={72} aria-label="input method"><Icon name="sogou" size={46} /></TrayButton>
            <Clock>19:02<br />2025/4/28</Clock>
            <Notes aria-label="notifications">
              <Icon name="note" />
              <Badge>3</Badge>
            </Notes>
          </Tray>
        </Taskbar>

        <InputBar>
          <InputLogo>
            <svg width="78" height="78" viewBox="0 0 40 40"><SogouS /></svg>
          </InputLogo>
          <InputStrip>
            <span>五</span>
            <Icon name="moon" />
            <Icon name="punct" />
            <Icon name="keyboard" />
            <Icon name="person" />
            <Icon name="clover" />
          </InputStrip>
        </InputBar>
        <Scroll />
      </Desktop>
    </>
  );
}
